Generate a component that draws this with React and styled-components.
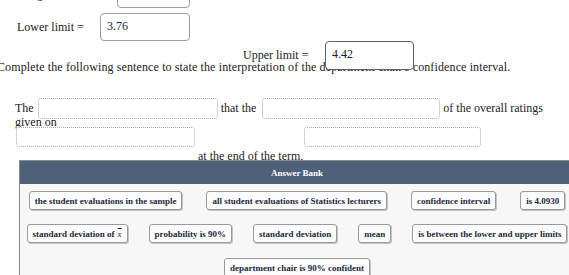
import styled, { createGlobalStyle } from 'styled-components';

const GlobalStyle = createGlobalStyle`
  html, body {
    margin: 0;
    padding: 0;
    background: #fff;
  }
  body {
    font-family: "Liberation Serif", "DejaVu Serif", serif;
    font-size: 12px;
    color: #222;
    overflow: hidden;
  }
`;

const Page = styled.div`
  width: 569px;
  height: 275px;
  overflow: hidden;
`;

const LimitRow = styled.div`
  display: flex;
  align-items: center;
  height: ${props => props.$height || 28}px;
  margin-top: ${props => props.$top}px;
  padding-left: ${props => props.$indent}px;
  white-space: nowrap;
`;

const LimitLabel = styled.span`
  width: ${props => props.$width}px;
  flex-shrink: 0;
`;

const ValueInput = styled.input`
  position: relative;
  z-index: 1;
  box-sizing: border-box;
  width: ${props => props.$width}px;
  height: 100%;
  padding: 0 0 2px 6px;
  border: 1px solid ${props => (props.$focused ? '#55647a' : '#9c9c9c')};
  border-radius: 4px;
  background: #fff;
  font-family: "Liberation Serif", "DejaVu Serif", serif;
  font-size: 12px;
  color: #222;
  outline: none;
`;

const Prompt = styled.p`
  margin: -10px 0 0 -3px;
  line-height: 14px;
  letter-spacing: 0.12px;
  white-space: nowrap;
`;

const SentenceRow = styled.div`
  display: flex;
  align-items: center;
  height: 21px;
  margin-top: 24px;
  padding-left: 15px;
  white-space: nowrap;
`;

const Word = styled.span`
  margin: 0 ${props => props.$after || 0}px 0 ${props => props.$before || 0}px;
`;

const DropZone = styled.div`
  box-sizing: border-box;
  width: ${props => props.$width}px;
  height: ${props => props.$height || 21}px;
  margin-left: ${props => props.$left || 0}px;
  border: 1px dotted #a8a8a8;
  border-radius: 3px;
  background: #fff;
  flex-shrink: 0;
`;

const GivenLine = styled.div`
  margin-top: -3px;
  padding-left: 15px;
  line-height: 12px;
`;

const DropRow = styled.div`
  display: flex;
  margin-top: -1px;
  padding-left: 16px;
`;

const TermLine = styled.div`
  padding: 2px 0 0 198px;
  line-height: 14px;
  white-space: nowrap;
`;

const Bank = styled.section`
  position: relative;
  box-sizing: border-box;
  width: 556px;
  height: 130px;
  margin: -3px 0 0 19px;
  border: 1px solid #8c8c8c;
  background: #f7f7f7;
`;

const BankHeader = styled.header`
  height: 23px;
  display: flex;
  align-items: center;
  justify-content: center;
  background: #4f6179;
  color: #fff;
  font-weight: bold;
  font-size: 9px;
`;

const ChipRow = styled.div`
  display: flex;
  justify-content: center;
  gap: ${props => props.$gap}px;
  margin-top: ${props => props.$top}px;
`;

const Chip = styled.div`
  box-sizing: border-box;
  height: 19px;
  padding: 0 5px;
  display: flex;
  align-items: center;
  border: 1px solid #9a9a9a;
  border-radius: 3px;
  background: #fcfcfc;
  box-shadow: 1px 1px 0 #c4c4c4;
  color: #1d2940;
  font-weight: bold;
  font-size: 9px;
  white-space: nowrap;
`;

const XBar = styled.span`
  font-style: italic;
  font-weight: normal;
  text-decoration: overline;
  margin-left: 3px;
`;

const rows = [
  { top: 7, gap: 24, items: ['the student evaluations in the sample', 'all student evaluations of Statistics lecturers', 'confidence interval', 'is 4.0930'] },
  { top: 14, gap: 21, items: ['xbar', 'probability is 90%', 'standard deviation', 'mean', 'is between the lower and upper limits'] },
  { top: 15, gap: 22, items: ['department chair is 90% confident'] },
];

function App() {
  return (
    <Page>
      <GlobalStyle />
      <LimitRow $top={-20} $indent={17}>
        <LimitLabel $width={100}>Margin of error =</LimitLabel>
        <ValueInput $width={73} readOnly value="" />
      </LimitRow>
      <LimitRow $top={5} $indent={17}>
        <LimitLabel $width={83}>Lower limit =</LimitLabel>
        <ValueInput $width={90} readOnly value="3.76" />
      </LimitRow>
      <LimitRow $top={0} $indent={243} $height={29}>
        <LimitLabel $width={82}>Upper limit =</LimitLabel>
        <ValueInput $width={89} $focused readOnly value="4.42" />
      </LimitRow>
      <Prompt>Complete the following sentence to state the interpretation of the department chair's confidence interval.</Prompt>
      <SentenceRow>
        <Word $after={4}>The</Word>
        <DropZone $width={180} />
        <Word $before={3} $after={6}>that the</Word>
        <DropZone $width={178} />
        <Word $before={3}>of the overall ratings</Word>
      </SentenceRow>
      <GivenLine>given on</GivenLine>
      <DropRow>
        <DropZone $width={179} $height={20} />
        <DropZone $width={177} $height={20} $left={109} />
      </DropRow>
      <TermLine>at the end of the term.</TermLine>
      <Bank>
        <BankHeader>Answer Bank</BankHeader>
        {rows.map((row, i) => (
          <ChipRow key={i} $top={row.top} $gap={row.gap}>
            {row.items.map(item => (
              <Chip key={item}>
                {item === 'xbar' ? <>standard deviation of<XBar>x</XBar></> : item}
              </Chip>
            ))}
          </ChipRow>
        ))}
      </Bank>
    </Page>
  );
}

export default App;
